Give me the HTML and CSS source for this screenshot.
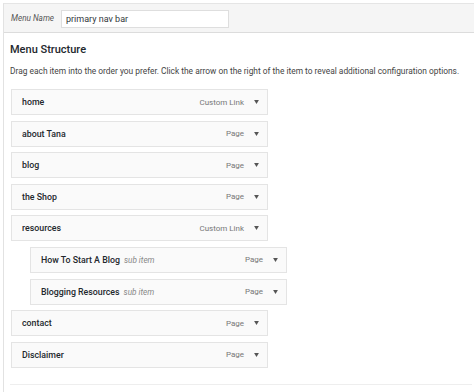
FILE: index.html
```html
<!DOCTYPE html>
<html lang="en">
  <head>
    <meta charset="UTF-8" />
    <title>Menus</title>
    <link rel="stylesheet" href="styles.css">
  </head>
  <body>
    <div class="menu-edit">
      <div class="menu-header">
        <label class="menu-name-label" for="menu-name">Menu Name</label>
        <input type="text" id="menu-name" class="menu-name" value="primary nav bar" />
      </div>
      <div class="menu-body">
        <h3>Menu Structure</h3>
        <p class="drag-help">Drag each item into the order you prefer. Click the arrow on the right of the item to reveal additional configuration options.</p>
        <ul class="menu-items">
          <li class="menu-item">
            <span class="item-title">home</span>
            <span class="item-type">Custom Link</span>
            <svg class="item-arrow" viewBox="0 0 6 5"><path d="M0 0h6L3 5z" /></svg>
          </li>
          <li class="menu-item">
            <span class="item-title">about Tana</span>
            <span class="item-type">Page</span>
            <svg class="item-arrow" viewBox="0 0 6 5"><path d="M0 0h6L3 5z" /></svg>
          </li>
          <li class="menu-item">
            <span class="item-title">blog</span>
            <span class="item-type">Page</span>
            <svg class="item-arrow" viewBox="0 0 6 5"><path d="M0 0h6L3 5z" /></svg>
          </li>
          <li class="menu-item">
            <span class="item-title">the Shop</span>
            <span class="item-type">Page</span>
            <svg class="item-arrow" viewBox="0 0 6 5"><path d="M0 0h6L3 5z" /></svg>
          </li>
          <li class="menu-item">
            <span class="item-title">resources</span>
            <span class="item-type">Custom Link</span>
            <svg class="item-arrow" viewBox="0 0 6 5"><path d="M0 0h6L3 5z" /></svg>
          </li>
          <li class="menu-item depth-1">
            <span class="item-title">How To Start A Blog</span>
            <span class="sub-label">sub item</span>
            <span class="item-type">Page</span>
            <svg class="item-arrow" viewBox="0 0 6 5"><path d="M0 0h6L3 5z" /></svg>
          </li>
          <li class="menu-item depth-1">
            <span class="item-title">Blogging Resources</span>
            <span class="sub-label">sub item</span>
            <span class="item-type">Page</span>
            <svg class="item-arrow" viewBox="0 0 6 5"><path d="M0 0h6L3 5z" /></svg>
          </li>
          <li class="menu-item">
            <span class="item-title">contact</span>
            <span class="item-type">Page</span>
            <svg class="item-arrow" viewBox="0 0 6 5"><path d="M0 0h6L3 5z" /></svg>
          </li>
          <li class="menu-item">
            <span class="item-title">Disclaimer</span>
            <span class="item-type">Page</span>
            <svg class="item-arrow" viewBox="0 0 6 5"><path d="M0 0h6L3 5z" /></svg>
          </li>
        </ul>
        <div class="menu-footer"></div>
      </div>
    </div>
  </body>
</html>
```

FILE: styles.css
```css
body {
  margin: 0;
  padding: 3px 0 0 3px;
  background: #fff;
  font-family: Roboto, Arial, sans-serif;
  color: #23282d;
}
.menu-edit {
  border-left: 1px solid #e2e2e2;
  border-top: 1px solid #e5e5e5;
  height: 389px;
}
.menu-header {
  display: flex;
  align-items: center;
  height: 28px;
  padding-left: 7px;
  background: #f5f5f5;
  border-bottom: 1px solid #dcdcdc;
}
.menu-name-label {
  width: 50px;
  white-space: nowrap;
  font-size: 8.2px;
  font-style: italic;
  color: #555;
}
.menu-name {
  box-sizing: border-box;
  width: 168px;
  height: 18px;
  margin: 1px 0 0 0;
  padding: 0 4px;
  border: 1px solid #dedede;
  background: #fff;
  font-family: Roboto, Arial, sans-serif;
  font-size: 9px;
  color: #32373c;
}
.menu-body {
  padding-left: 6px;
}
h3 {
  margin: 10px 0 0 0;
  font-size: 11px;
  font-weight: 500;
  line-height: 14px;
  color: #23282d;
}
.drag-help {
  margin: 8px 0 0 0;
  font-size: 8.4px;
  line-height: 12px;
  color: #444;
  white-space: nowrap;
}
.menu-items {
  list-style: none;
  margin: 12px 0 0 1px;
  padding: 0;
  display: flex;
  flex-direction: column;
  gap: 5.6px;
}
.menu-item {
  box-sizing: border-box;
  display: flex;
  align-items: center;
  width: 257px;
  height: 26px;
  padding: 0 8px 0 10px;
  background: #fafafa;
  border: 1px solid #e4e4e4;
}
.menu-item.depth-1 {
  margin-left: 19px;
}
.item-title {
  font-size: 8.8px;
  font-weight: 500;
  color: #23282d;
}
.sub-label {
  margin-left: 4px;
  font-size: 8.2px;
  font-style: italic;
  color: #888;
}
.item-type {
  margin-left: auto;
  font-size: 8px;
  color: #777;
}
.item-arrow {
  width: 5px;
  height: 4px;
  margin-left: 10px;
  fill: #555;
}
.menu-footer {
  margin-top: 16px;
  margin-right: 2px;
  border-top: 1px solid #eee;
}
```
